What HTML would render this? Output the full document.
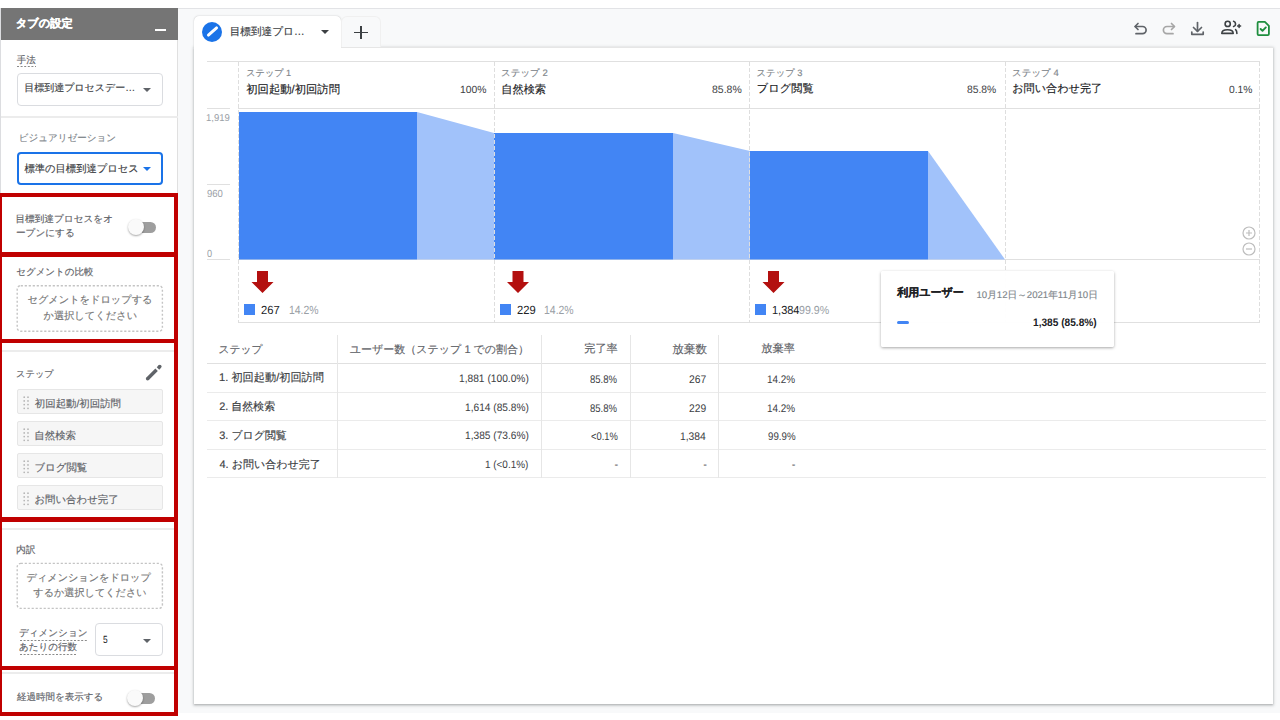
<!DOCTYPE html>
<html lang="ja">
<head>
<meta charset="utf-8">
<style>
*{box-sizing:border-box;margin:0;padding:0}
html,body{width:1280px;height:720px;overflow:hidden;background:#fff;font-family:"Liberation Sans",sans-serif;color:#3c4043}
.a{position:absolute;white-space:nowrap}
.t{position:absolute;white-space:nowrap;line-height:1;text-rendering:geometricPrecision}
.j{-webkit-text-stroke:0.15px currentColor}
.jb{-webkit-text-stroke:0.3px currentColor}
#side{position:absolute;left:1px;top:8px;width:177px;height:704px;background:#fff;border-right:1px solid #e0e0e0}
#shead{position:absolute;left:1px;top:8px;width:177px;height:32px;background:#757575}
#main{position:absolute;left:178px;top:8px;width:1102px;height:705px;background:#f8f9fa;border-top:1px solid #e2e3e6}
.sep{position:absolute;left:1px;width:177px;height:1.6px;background:#ececec}
.sel{position:absolute;border:1px solid #dadce0;border-radius:4px;background:#fff}
.tri{position:absolute;width:0;height:0;border-left:4px solid transparent;border-right:4px solid transparent;border-top:4px solid #5f6368}
.red{position:absolute;border:4px solid #c00000}
.dash{position:absolute;border:1px dashed #c6c6c6;border-radius:4px}
.chip{position:absolute;left:17px;width:146px;height:25px;background:#f6f6f6;border:1px solid #e6e6e6;border-radius:2px}
.dots{position:absolute;left:6px;top:7px;width:6px;height:12px;background-image:radial-gradient(circle,#bdbdbd 0.9px,transparent 1.1px);background-size:4px 4px}
.tog{position:absolute;width:28px;height:16px}
.tog .tr{position:absolute;left:2px;top:3px;width:26px;height:11px;border-radius:6px;background:#9e9e9e}
.tog .th{position:absolute;left:0;top:0;width:16px;height:16px;border-radius:50%;background:#fafafa;box-shadow:0 1px 2px rgba(0,0,0,.35)}
#panel{position:absolute;left:194px;top:47px;width:1079px;height:657px;background:#fff;box-shadow:0 1px 2px rgba(60,64,67,.3),0 1px 3px 1px rgba(60,64,67,.15)}
.vd{position:absolute;width:0;border-left:1px dashed #d0d0d0}
.hl{position:absolute;height:1px;background:#e0e0e0}
</style>
</head>
<body>
<div id="side"></div>
<div id="shead"></div>
<div class="a" style="left:0;top:8px;width:1px;height:704px;background:#dcdde0"></div>
<div class="a" style="left:155px;top:29px;width:11px;height:2px;background:#fff"></div>
<div class="sel" style="left:17px;top:73px;width:146px;height:33px"></div>
<div class="tri" style="left:143px;top:88px"></div>
<div class="sep" style="top:116.3px"></div>
<div class="sel" style="left:17px;top:152px;width:146px;height:33px;border:2px solid #1a73e8"></div>
<div class="tri" style="left:143px;top:167px;border-top-color:#1a73e8"></div>
<div class="tog" style="left:127.5px;top:218.5px"><div class="tr"></div><div class="th"></div></div>
<svg class="a" style="left:0;top:0" width="180" height="720"><rect x="17.2" y="285.7" width="145.2" height="45.6" rx="3.5" fill="none" stroke="#c4c4c4" stroke-width="1.4" stroke-dasharray="2.2 1.8"/></svg>
<div class="sep" style="top:350.2px"></div>
<svg class="a" style="left:140px;top:360px" width="26" height="26" viewBox="0 0 26 26"><g stroke="#5f6368" stroke-width="3.5" stroke-linecap="butt"><path d="M7.6 18.8 L16.6 9.8"/><path d="M18 8.4 L19.8 6.6"/></g><g fill="#5f6368"><circle cx="7.6" cy="18.8" r="1.75"/><circle cx="19.8" cy="6.6" r="1.75"/></g></svg>
<div class="chip" style="top:389px"><svg class="a" style="left:0;top:0" width="20" height="25"><g fill="#b3b3b3"><circle cx="6.2" cy="7.2" r="0.85"/><circle cx="10" cy="7.2" r="0.85"/><circle cx="6.2" cy="10.9" r="0.85"/><circle cx="10" cy="10.9" r="0.85"/><circle cx="6.2" cy="14.6" r="0.85"/><circle cx="10" cy="14.6" r="0.85"/><circle cx="6.2" cy="18.3" r="0.85"/><circle cx="10" cy="18.3" r="0.85"/></g></svg></div>
<div class="chip" style="top:421px"><svg class="a" style="left:0;top:0" width="20" height="25"><g fill="#b3b3b3"><circle cx="6.2" cy="7.2" r="0.85"/><circle cx="10" cy="7.2" r="0.85"/><circle cx="6.2" cy="10.9" r="0.85"/><circle cx="10" cy="10.9" r="0.85"/><circle cx="6.2" cy="14.6" r="0.85"/><circle cx="10" cy="14.6" r="0.85"/><circle cx="6.2" cy="18.3" r="0.85"/><circle cx="10" cy="18.3" r="0.85"/></g></svg></div>
<div class="chip" style="top:453px"><svg class="a" style="left:0;top:0" width="20" height="25"><g fill="#b3b3b3"><circle cx="6.2" cy="7.2" r="0.85"/><circle cx="10" cy="7.2" r="0.85"/><circle cx="6.2" cy="10.9" r="0.85"/><circle cx="10" cy="10.9" r="0.85"/><circle cx="6.2" cy="14.6" r="0.85"/><circle cx="10" cy="14.6" r="0.85"/><circle cx="6.2" cy="18.3" r="0.85"/><circle cx="10" cy="18.3" r="0.85"/></g></svg></div>
<div class="chip" style="top:485px"><svg class="a" style="left:0;top:0" width="20" height="25"><g fill="#b3b3b3"><circle cx="6.2" cy="7.2" r="0.85"/><circle cx="10" cy="7.2" r="0.85"/><circle cx="6.2" cy="10.9" r="0.85"/><circle cx="10" cy="10.9" r="0.85"/><circle cx="6.2" cy="14.6" r="0.85"/><circle cx="10" cy="14.6" r="0.85"/><circle cx="6.2" cy="18.3" r="0.85"/><circle cx="10" cy="18.3" r="0.85"/></g></svg></div>
<div class="sep" style="top:528.3px"></div>
<svg class="a" style="left:0;top:0" width="180" height="720"><rect x="17.2" y="563.4" width="145.2" height="45" rx="3.5" fill="none" stroke="#c4c4c4" stroke-width="1.4" stroke-dasharray="2.2 1.8"/></svg>
<svg class="a" style="left:0;top:0" width="180" height="720"><g stroke="#8a8a8a" stroke-width="1" stroke-dasharray="2 1.6"><path d="M20 640.5 H87"/><path d="M20 654.5 H77"/><path d="M17 66.5 H36"/></g></svg>
<div class="sel" style="left:95px;top:623px;width:68px;height:33px"></div>
<div class="tri" style="left:143px;top:639px"></div>
<div class="sep" style="top:672px"></div>
<div class="tog" style="left:127px;top:689.8px"><div class="tr"></div><div class="th"></div></div>
<div class="red" style="left:-2px;top:193px;width:180px;height:64px"></div>
<div class="red" style="left:-2px;top:252px;width:180px;height:91px"></div>
<div class="red" style="left:-2px;top:339px;width:180px;height:183px"></div>
<div class="red" style="left:-2px;top:517px;width:180px;height:153px"></div>
<div class="red" style="left:-2px;top:666px;width:180px;height:50px"></div>

<div id="main"></div>
<div id="panel"></div>
<div class="a" style="left:194px;top:16px;width:147px;height:32px;background:#fff;border-radius:5px 5px 0 0;box-shadow:0 0 1.5px rgba(60,64,67,.35);clip-path:inset(-5px -5px 0 -5px)"></div>
<div class="a" style="left:341px;top:15.5px;width:40px;height:32px;background:#f8f9fa;border:1px solid #f0f0f0;border-bottom:none;border-radius:6px 6px 0 0"></div>
<div class="a" style="left:341px;top:47px;width:932px;height:1px;background:#e6e6e6"></div>
<div class="a" style="left:202px;top:22px;width:20px;height:20px;border-radius:50%;background:#1a73e8"></div>
<svg class="a" style="left:202px;top:22px" width="20" height="20" viewBox="0 0 20 20"><path d="M6.4 13.1 L14.6 5.9" stroke="#fff" stroke-width="2.9" stroke-linecap="round"/><path d="M7.4 12.2 L13.6 6.8" stroke="#d6e4fb" stroke-width="0.6" stroke-dasharray="0.8 0.8"/></svg>
<div class="tri" style="left:321px;top:30px;border-top-color:#3c4043;border-left-width:4px;border-right-width:4px;border-top-width:4.5px"></div>
<div class="a" style="left:354.2px;top:31.6px;width:13.6px;height:1.4px;background:#3c4043"></div>
<div class="a" style="left:360.3px;top:25.8px;width:1.4px;height:13px;background:#3c4043"></div>

<svg class="a" style="left:1130px;top:19px" width="20" height="20" viewBox="0 0 20 20" fill="none" stroke="#5f6368" stroke-width="1.7" stroke-linecap="round" stroke-linejoin="round"><path d="M8 4.5 L5 7.5 L8 10.5"/><path d="M5.5 7.5 H12.5 A3.6 3.6 0 0 1 12.5 14.7 H6"/></svg>
<svg class="a" style="left:1159px;top:19px" width="20" height="20" viewBox="0 0 20 20" fill="none" stroke="#a6a6a6" stroke-width="1.7" stroke-linecap="round" stroke-linejoin="round"><path d="M12.5 4.5 L15.5 7.5 L12.5 10.5"/><path d="M15 7.5 H8 A3.6 3.6 0 0 0 8 14.7 H14"/></svg>
<svg class="a" style="left:1187px;top:19px" width="20" height="20" viewBox="0 0 20 20" fill="none" stroke="#5f6368" stroke-width="1.7" stroke-linecap="round" stroke-linejoin="round"><path d="M10.5 3.5 V12"/><path d="M6.5 8.5 L10.5 12.3 L14.5 8.5"/><path d="M4.8 13 V15.3 H16.2 V13"/></svg>
<svg class="a" style="left:1219px;top:19px" width="24" height="18" viewBox="0 0 24 18" fill="none" stroke="#3c4043" stroke-width="1.6" stroke-linecap="round" stroke-linejoin="round"><circle cx="8.7" cy="4.9" r="2.6"/><path d="M2.8 14.4 C2.8 9.6 14.2 9.6 14.2 14.4 Z"/><path d="M14.6 2.3 A2.7 2.7 0 0 1 14.6 7.5"/><path d="M16.6 10.6 C17.6 11.4 17.9 12.7 17.9 14.4"/><path d="M18.6 6.9 H21.6 M20.1 5.4 V8.4" stroke-width="1.5"/></svg>
<svg class="a" style="left:1255px;top:20px" width="17" height="17" viewBox="0 0 17 17" fill="none" stroke="#1e8e3e" stroke-width="1.8" stroke-linecap="round" stroke-linejoin="round"><path d="M3.6 1.9 H9.9 L13.9 5.9 V14 Q13.9 15.1 12.8 15.1 H3.6 Q2.6 15.1 2.6 14 V3 Q2.6 1.9 3.6 1.9 Z"/><path d="M5.6 9 L7.5 10.8 L10.8 7.4" stroke-width="1.9"/></svg>

<div class="hl" style="left:207px;top:61px;width:1053px"></div>
<div class="hl" style="left:238px;top:108px;width:1022px"></div>
<div class="hl" style="left:207px;top:108px;width:23px"></div>
<div class="hl" style="left:207px;top:184px;width:23px"></div>
<div class="hl" style="left:207px;top:259px;width:23px"></div>
<div class="hl" style="left:238px;top:259px;width:1022px"></div>
<div class="hl" style="left:238px;top:322px;width:1022px"></div>

<svg class="a" style="left:0;top:0" width="1280" height="720">
<rect x="239" y="112" width="178" height="147.5" fill="#4285f4"/>
<polygon points="417,112 494,133 494,259.5 417,259.5" fill="#a1c2fa"/>
<rect x="494" y="133" width="179" height="126.5" fill="#4285f4"/>
<polygon points="673,133 750,151 750,259.5 673,259.5" fill="#a1c2fa"/>
<rect x="750" y="151" width="178" height="108.5" fill="#4285f4"/>
<polygon points="928,151 1005,259.5 928,259.5" fill="#a1c2fa"/>
<g fill="#b3100f">
<path d="M257 271 H268 V282 H273.5 L262.5 293 L251.5 282 H257 Z"/>
<path d="M512.5 271 H523.5 V282 H529 L518 293 L507 282 H512.5 Z"/>
<path d="M768 271 H779 V282 H784.5 L773.5 293 L762.5 282 H768 Z"/>
</g>
</svg>

<svg class="a" style="left:0;top:0" width="1280" height="720"><g stroke="#dedede" stroke-width="1" stroke-dasharray="4 2">
<path d="M238.5 62 V323"/><path d="M494.5 62 V323"/><path d="M749.5 62 V323"/><path d="M1005.5 62 V323"/><path d="M1259.5 62 V323"/></g></svg>
<div class="a" style="left:244px;top:304px;width:11px;height:11px;background:#4285f4"></div>
<div class="a" style="left:500px;top:304px;width:11px;height:11px;background:#4285f4"></div>
<div class="a" style="left:755px;top:304px;width:11px;height:11px;background:#4285f4"></div>

<svg class="a" style="left:1241px;top:225px" width="16" height="32" viewBox="0 0 16 32" fill="none" stroke="#bdbdbd" stroke-width="1.2"><circle cx="8" cy="8" r="6"/><path d="M5 8 H11 M8 5 V11"/><circle cx="8" cy="24" r="6"/><path d="M5 24 H11"/></svg>

<div class="a" style="left:881px;top:271px;width:233px;height:76px;background:rgba(255,255,255,.96);box-shadow:0 1px 3px rgba(0,0,0,.35);border-radius:2px"></div>
<div class="a" style="left:897px;top:321px;width:12px;height:3px;border-radius:2px;background:#4285f4"></div>

<div class="hl" style="left:207px;top:363px;width:1059px"></div>
<div class="hl" style="left:207px;top:392px;width:1059px;background:#ebebeb"></div>
<div class="hl" style="left:207px;top:420px;width:1059px;background:#ebebeb"></div>
<div class="hl" style="left:207px;top:449px;width:1059px;background:#ebebeb"></div>
<div class="hl" style="left:207px;top:477px;width:1059px;background:#ebebeb"></div>
<div class="a" style="left:337px;top:335px;width:1px;height:143px;background:#e6e6e6"></div>
<div class="a" style="left:541px;top:335px;width:1px;height:143px;background:#e6e6e6"></div>
<div class="a" style="left:630px;top:335px;width:1px;height:143px;background:#e6e6e6"></div>
<div class="a" style="left:718px;top:335px;width:1px;height:143px;background:#e6e6e6"></div>
<div class="t jb" id="t_tab" style="left:15.83px;top:18.90px;font-size:11.264px;color:#ffffff;font-weight:bold">タブの設定</div>
<div class="t j" id="t_shuho" style="left:16.79px;top:55.77px;font-size:9.460px;color:#5f6368">手法</div>
<div class="t j" id="t_sel1" style="left:24.13px;top:84.45px;font-size:10.000px;color:#3c4043">目標到達プロセスデー…</div>
<div class="t j" id="t_vis" style="left:18.74px;top:133.61px;font-size:9.520px;color:#80868b">ビジュアリゼーション</div>
<div class="t j" id="t_sel2" style="left:24.43px;top:164.66px;font-size:10.300px;color:#3c4043">標準の目標到達プロセス</div>
<div class="t j" id="t_open1" style="left:15.44px;top:215.26px;font-size:9.640px;color:#5f6368">目標到達プロセスをオ</div>
<div class="t j" id="t_open2" style="left:15.94px;top:229.17px;font-size:9.640px;color:#5f6368">ープンにする</div>
<div class="t j" id="t_seg" style="left:16.16px;top:267.99px;font-size:9.520px;color:#5f6368">セグメントの比較</div>
<div class="t j" id="t_segd1" style="left:27.56px;top:295.99px;font-size:10.180px;color:#757575">セグメントをドロップする</div>
<div class="t j" id="t_segd2" style="left:43.43px;top:311.50px;font-size:10.240px;color:#757575">か選択してください</div>
<div class="t j" id="t_step" style="left:16.06px;top:369.99px;font-size:9.220px;color:#5f6368">ステップ</div>
<div class="t j" id="t_c1" style="left:34.82px;top:400.14px;font-size:10.420px;color:#5f6368">初回起動/初回訪問</div>
<div class="t j" id="t_c2" style="left:34.33px;top:432.14px;font-size:10.420px;color:#5f6368">自然検索</div>
<div class="t j" id="t_c3" style="left:34.47px;top:464.43px;font-size:10.420px;color:#5f6368">ブログ閲覧</div>
<div class="t j" id="t_c4" style="left:34.40px;top:496.14px;font-size:10.420px;color:#5f6368">お問い合わせ完了</div>
<div class="t j" id="t_uchi" style="left:15.93px;top:545.51px;font-size:9.820px;color:#5f6368">内訳</div>
<div class="t j" id="t_dimd1" style="left:26.62px;top:573.84px;font-size:10.120px;color:#757575">ディメンションをドロップ</div>
<div class="t j" id="t_dimd2" style="left:33.32px;top:589.40px;font-size:10.120px;color:#757575">するか選択してください</div>
<div class="t j" id="t_dim1" style="left:18.89px;top:628.86px;font-size:9.580px;color:#5f6368">ディメンション</div>
<div class="t j" id="t_dim2" style="left:19.08px;top:642.53px;font-size:9.520px;color:#5f6368">あたりの行数</div>
<div class="t" id="t_five" style="left:103.48px;top:635.55px;font-size:10.420px;color:#202124;transform:scaleX(0.8000);transform-origin:0 0">5</div>
<div class="t j" id="t_keika" style="left:16.94px;top:692.77px;font-size:9.520px;color:#5f6368">経過時間を表示する</div>
<div class="t j" id="t_tabname" style="left:229.72px;top:26.53px;font-size:10.632px;color:#3c4043">目標到達プロ…</div>
<div class="t j" id="t_s1" style="left:246.28px;top:69.09px;font-size:9.100px;color:#80868b">ステップ 1</div>
<div class="t j" id="t_n1" style="left:246.22px;top:84.66px;font-size:11.330px;color:#202124">初回起動/初回訪問</div>
<div class="t" id="t_p1" style="left:459.73px;top:85.56px;font-size:10.406px;color:#3c4043;transform:scaleX(0.9980);transform-origin:0 0">100%</div>
<div class="t j" id="t_s2" style="left:501.09px;top:68.96px;font-size:9.460px;color:#80868b">ステップ 2</div>
<div class="t j" id="t_n2" style="left:501.26px;top:84.72px;font-size:11.198px;color:#202124">自然検索</div>
<div class="t" id="t_p2" style="left:711.54px;top:85.23px;font-size:10.736px;color:#3c4043;transform:scaleX(0.9771);transform-origin:0 0">85.8%</div>
<div class="t j" id="t_s3" style="left:756.57px;top:69.05px;font-size:9.340px;color:#80868b">ステップ 3</div>
<div class="t j" id="t_n3" style="left:756.86px;top:84.47px;font-size:11.198px;color:#202124">ブログ閲覧</div>
<div class="t" id="t_p3" style="left:967.48px;top:85.23px;font-size:10.736px;color:#3c4043;transform:scaleX(0.9643);transform-origin:0 0">85.8%</div>
<div class="t j" id="t_s4" style="left:1012.09px;top:68.96px;font-size:9.460px;color:#80868b">ステップ 4</div>
<div class="t j" id="t_n4" style="left:1012.13px;top:84.38px;font-size:11.132px;color:#202124">お問い合わせ完了</div>
<div class="t" id="t_p4" style="left:1229.00px;top:84.68px;font-size:10.538px;color:#3c4043;transform:scaleX(0.9779);transform-origin:0 0">0.1%</div>
<div class="t" id="t_ax1" style="left:205.99px;top:113.50px;font-size:9.940px;color:#9aa0a6;transform:scaleX(0.9614);transform-origin:0 0">1,919</div>
<div class="t" id="t_ax2" style="left:207.00px;top:190.04px;font-size:10.240px;color:#9aa0a6;transform:scaleX(0.9313);transform-origin:0 0">960</div>
<div class="t" id="t_ax3" style="left:207.01px;top:250.22px;font-size:10.240px;color:#9aa0a6;transform:scaleX(0.8952);transform-origin:0 0">0</div>
<div class="t" id="t_d1" style="left:261.00px;top:305.29px;font-size:11.792px;color:#202124;transform:scaleX(0.9512);transform-origin:0 0">267</div>
<div class="t" id="t_r1" style="left:288.53px;top:305.31px;font-size:11.858px;color:#9aa0a6;transform:scaleX(0.8821);transform-origin:0 0">14.2%</div>
<div class="t" id="t_d2" style="left:516.96px;top:305.30px;font-size:11.858px;color:#202124;transform:scaleX(0.9463);transform-origin:0 0">229</div>
<div class="t" id="t_r2" style="left:543.55px;top:305.29px;font-size:11.858px;color:#9aa0a6;transform:scaleX(0.8830);transform-origin:0 0">14.2%</div>
<div class="t" id="t_d3" style="left:771.52px;top:305.14px;font-size:11.792px;color:#202124;transform:scaleX(0.9318);transform-origin:0 0">1,384</div>
<div class="t" id="t_r3" style="left:798.54px;top:305.32px;font-size:11.660px;color:#9aa0a6;transform:scaleX(0.9132);transform-origin:0 0">99.9%</div>
<div class="t j" id="t_tt1" style="left:897.30px;top:288.31px;font-size:11.000px;color:#202124;font-weight:bold">利用ユーザー</div>
<div class="t j" id="t_tt2" style="left:976.50px;top:290.50px;font-size:9.640px;color:#80868b">10月12日～2021年11月10日</div>
<div class="t" id="t_tt3" style="left:1033.43px;top:317.74px;font-size:10.934px;color:#202124;transform:scaleX(0.9286);transform-origin:0 0;font-weight:bold">1,385 (85.8%)</div>
<div class="t j" id="t_h1" style="left:218.45px;top:344.69px;font-size:10.802px;color:#5f6368">ステップ</div>
<div class="t j" id="t_h2" style="left:349.81px;top:344.81px;font-size:11.000px;color:#5f6368">ユーザー数（ステップ 1 での割合）</div>
<div class="t j" id="t_h3" style="left:584.25px;top:344.15px;font-size:11.132px;color:#5f6368">完了率</div>
<div class="t j" id="t_h4" style="left:672.28px;top:344.71px;font-size:11.594px;color:#5f6368">放棄数</div>
<div class="t j" id="t_h5" style="left:761.37px;top:344.18px;font-size:11.198px;color:#5f6368">放棄率</div>
<div class="t j" id="t_r1c1" style="left:218.94px;top:372.89px;font-size:11.198px;color:#3c4043">1. 初回起動/初回訪問</div>
<div class="t j" id="t_r2c1" style="left:219.23px;top:401.71px;font-size:10.934px;color:#3c4043">2. 自然検索</div>
<div class="t j" id="t_r3c1" style="left:219.28px;top:431.18px;font-size:10.934px;color:#3c4043">3. ブログ閲覧</div>
<div class="t j" id="t_r4c1" style="left:219.44px;top:459.51px;font-size:11.000px;color:#3c4043">4. お問い合わせ完了</div>
<div class="t" id="t_r1c2" style="left:459.25px;top:373.56px;font-size:10.802px;color:#3c4043;transform:scaleX(0.9457);transform-origin:0 0">1,881 (100.0%)</div>
<div class="t" id="t_r2c2" style="left:465.21px;top:402.51px;font-size:10.802px;color:#3c4043;transform:scaleX(0.9417);transform-origin:0 0">1,614 (85.8%)</div>
<div class="t" id="t_r3c2" style="left:465.21px;top:431.03px;font-size:10.802px;color:#3c4043;transform:scaleX(0.9417);transform-origin:0 0">1,385 (73.6%)</div>
<div class="t" id="t_r4c2" style="left:485.33px;top:459.58px;font-size:10.736px;color:#3c4043;transform:scaleX(0.9256);transform-origin:0 0">1 (&lt;0.1%)</div>
<div class="t" id="t_r1c3" style="left:590.00px;top:374.93px;font-size:11.000px;color:#3c4043;transform:scaleX(0.8654);transform-origin:0 0">85.8%</div>
<div class="t" id="t_r2c3" style="left:590.00px;top:403.68px;font-size:11.000px;color:#3c4043;transform:scaleX(0.8654);transform-origin:0 0">85.8%</div>
<div class="t" id="t_r3c3" style="left:590.50px;top:432.43px;font-size:11.000px;color:#3c4043;transform:scaleX(0.8534);transform-origin:0 0">&lt;0.1%</div>
<div class="t" id="t_r4c3" style="left:614.62px;top:459.93px;font-size:11.000px;color:#3c4043">-</div>
<div class="t" id="t_r1c4" style="left:689.25px;top:374.93px;font-size:11.000px;color:#3c4043;transform:scaleX(0.9391);transform-origin:0 0">267</div>
<div class="t" id="t_r2c4" style="left:689.25px;top:403.68px;font-size:11.000px;color:#3c4043;transform:scaleX(0.9322);transform-origin:0 0">229</div>
<div class="t" id="t_r3c4" style="left:680.06px;top:431.71px;font-size:11.000px;color:#3c4043;transform:scaleX(0.9362);transform-origin:0 0">1,384</div>
<div class="t" id="t_r4c4" style="left:703.13px;top:459.92px;font-size:11.000px;color:#3c4043">-</div>
<div class="t" id="t_r1c5" style="left:766.88px;top:374.93px;font-size:11.000px;color:#3c4043;transform:scaleX(0.9022);transform-origin:0 0">14.2%</div>
<div class="t" id="t_r2c5" style="left:766.88px;top:403.68px;font-size:11.000px;color:#3c4043;transform:scaleX(0.9022);transform-origin:0 0">14.2%</div>
<div class="t" id="t_r3c5" style="left:767.50px;top:432.43px;font-size:11.000px;color:#3c4043;transform:scaleX(0.8850);transform-origin:0 0">99.9%</div>
<div class="t" id="t_r4c5" style="left:791.76px;top:459.93px;font-size:11.000px;color:#3c4043">-</div>
</body>
</html>
